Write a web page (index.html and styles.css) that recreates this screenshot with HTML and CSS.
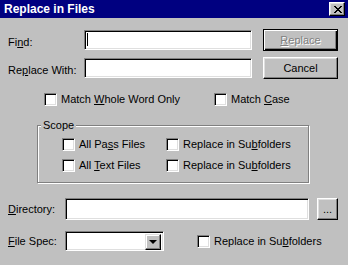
FILE: index.html
```html
<!DOCTYPE html>
<html lang="en">
<head>
  <meta charset="UTF-8">
  <title>Replace in Files</title>
  <link rel="stylesheet" href="styles.css">
</head>
<body>
  <div class="dialog">
    <div class="titlebar">
      <span class="title">Replace in Files</span>
      <span class="close-btn">
        <svg width="8" height="7" viewBox="0 0 8 7">
          <path d="M0 0h2v1H0zM6 0h2v1H6zM1 1h2v1H1zM5 1h2v1H5zM2 2h4v1H2zM3 3h2v1H3zM2 4h4v1H2zM1 5h2v1H1zM5 5h2v1H5zM0 6h2v1H0zM6 6h2v1H6z" fill="#000"/>
        </svg>
      </span>
    </div>

    <div class="content">
      <div class="top">
        <span class="lbl">Fi<u>n</u>d:</span>
        <div class="field"><span class="caret"></span></div>
        <button class="btn btn-default" disabled><u>R</u>eplace</button>
        <span class="lbl">Re<u>p</u>lace With:</span>
        <div class="field"></div>
        <button class="btn">Cancel</button>
      </div>

      <div class="options">
        <label class="check check-wide"><span class="box"></span><span>Match <u>W</u>hole Word Only</span></label>
        <label class="check"><span class="box"></span><span>Match <u>C</u>ase</span></label>
      </div>

      <div class="scope">
        <span class="scope-title">Scope</span>
        <div class="scope-grid">
          <label class="check"><span class="box"></span><span>All Pa<u>s</u>s Files</span></label>
          <label class="check"><span class="box"></span><span>Replace in Su<u>b</u>folders</span></label>
          <label class="check"><span class="box"></span><span>All <u>T</u>ext Files</span></label>
          <label class="check"><span class="box"></span><span>Replace in Su<u>b</u>folders</span></label>
        </div>
      </div>

      <div class="dir-row">
        <span class="lbl-short"><u>D</u>irectory:</span>
        <div class="field field-dir"></div>
        <button class="btn btn-browse">...</button>
      </div>

      <div class="spec-row">
        <span class="lbl-short"><u>F</u>ile Spec:</span>
        <div class="field combo">
          <span class="combo-btn"><span class="arrow"></span></span>
        </div>
        <label class="check check-sub"><span class="box"></span><span>Replace in Su<u>b</u>folders</span></label>
      </div>
    </div>
  </div>
</body>
</html>
```

FILE: styles.css
```css
body {
  margin: 0;
  font-family: "Liberation Sans", Arial, sans-serif;
  font-size: 11px;
  line-height: 13px;
  color: #000;
  background: #c0c0c0;
}

.dialog {
  width: 348px;
  height: 265px;
  background: #c0c0c0;
  overflow: hidden;
}

/* title bar */
.titlebar {
  height: 18px;
  background: #000080;
  display: flex;
  align-items: center;
  justify-content: space-between;
  padding: 0 3px 0 4px;
}

.title {
  color: #fff;
  font-weight: bold;
  font-size: 12px;
}

.close-btn {
  width: 16px;
  height: 14px;
  box-sizing: border-box;
  background: #c0c0c0;
  border: 1px solid;
  border-color: #fff #000 #000 #fff;
  box-shadow: inset -1px -1px #808080, inset 1px 1px #dfdfdf;
  display: flex;
  align-items: center;
  justify-content: center;
}

.close-btn svg {
  display: block;
  margin-left: 1px;
}

/* common controls */
u {
  text-decoration: underline;
  text-underline-offset: 1px;
}

.field {
  background: #fff;
  box-sizing: border-box;
  height: 20px;
  border: 1px solid;
  border-color: #808080 #fff #fff #808080;
  box-shadow: inset 1px 1px #000, inset -1px -1px #dfdfdf;
}

.caret {
  display: block;
  width: 1px;
  height: 13px;
  background: #000;
  margin: 2px 0 0 2px;
}

.btn {
  font-family: inherit;
  font-size: 11px;
  color: #000;
  background: #c0c0c0;
  box-sizing: border-box;
  height: 22px;
  padding: 0;
  border: 1px solid;
  border-color: #fff #000 #000 #fff;
  box-shadow: inset -1px -1px #808080, inset 1px 1px #dfdfdf;
}

.btn-default {
  border-color: #000;
  box-shadow: inset 1px 1px #fff, inset -1px -1px #000, inset -2px -2px #808080;
}

.btn:disabled {
  color: #808080;
  text-shadow: 1px 1px 0 #fff;
}

.box {
  width: 13px;
  height: 13px;
  box-sizing: border-box;
  flex: none;
  background: #fff;
  border: 1px solid;
  border-color: #808080 #fff #fff #808080;
  box-shadow: inset 1px 1px #000, inset -1px -1px #dfdfdf;
}

.check {
  display: flex;
  align-items: center;
  gap: 4px;
  white-space: nowrap;
}

/* find / replace area */
.content {
  padding-left: 8px;
}

.top {
  margin-top: 12px;
  display: grid;
  grid-template-columns: 76px 179px 75px;
  grid-auto-rows: 20px;
  row-gap: 8px;
}

.top .field {
  width: 168px;
}

.top .btn {
  align-self: center;
}

.lbl {
  padding-top: 6px;
}

/* options */
.options {
  margin-top: 15px;
  padding-left: 36px;
  display: flex;
}

.check-wide {
  width: 170px;
}

/* scope group */
.scope {
  position: relative;
  margin: 19px 0 0 29px;
  width: 272px;
  height: 58px;
  box-sizing: border-box;
  border: 1px solid #808080;
  box-shadow: inset 1px 1px #fff, 1px 1px #fff;
}

.scope-title {
  position: absolute;
  top: -7px;
  left: 3px;
  padding: 0 2px;
  background: #c0c0c0;
}

.scope-grid {
  display: grid;
  grid-template-columns: 104px auto;
  row-gap: 8px;
  padding: 12px 0 0 24px;
}

/* directory / file spec */
.dir-row,
.spec-row {
  display: flex;
  align-items: center;
}

.dir-row {
  margin-top: 15px;
}

.spec-row {
  margin-top: 11px;
}

.lbl-short {
  width: 57px;
  flex: none;
}

.field-dir {
  width: 244px;
  height: 22px;
}

.btn-browse {
  width: 21px;
  margin-left: 8px;
}

.combo {
  width: 99px;
  display: flex;
  justify-content: flex-end;
  padding: 2px;
}

.combo-btn {
  width: 16px;
  height: 16px;
  box-sizing: border-box;
  background: #c0c0c0;
  border: 1px solid;
  border-color: #dfdfdf #000 #000 #dfdfdf;
  box-shadow: inset -1px -1px #808080, inset 1px 1px #fff;
  display: flex;
  align-items: center;
  justify-content: center;
}

.arrow {
  width: 0;
  height: 0;
  border-left: 4px solid transparent;
  border-right: 4px solid transparent;
  border-top: 4px solid #000;
  margin-left: -1px;
}

.check-sub {
  margin-left: 33px;
}
```
